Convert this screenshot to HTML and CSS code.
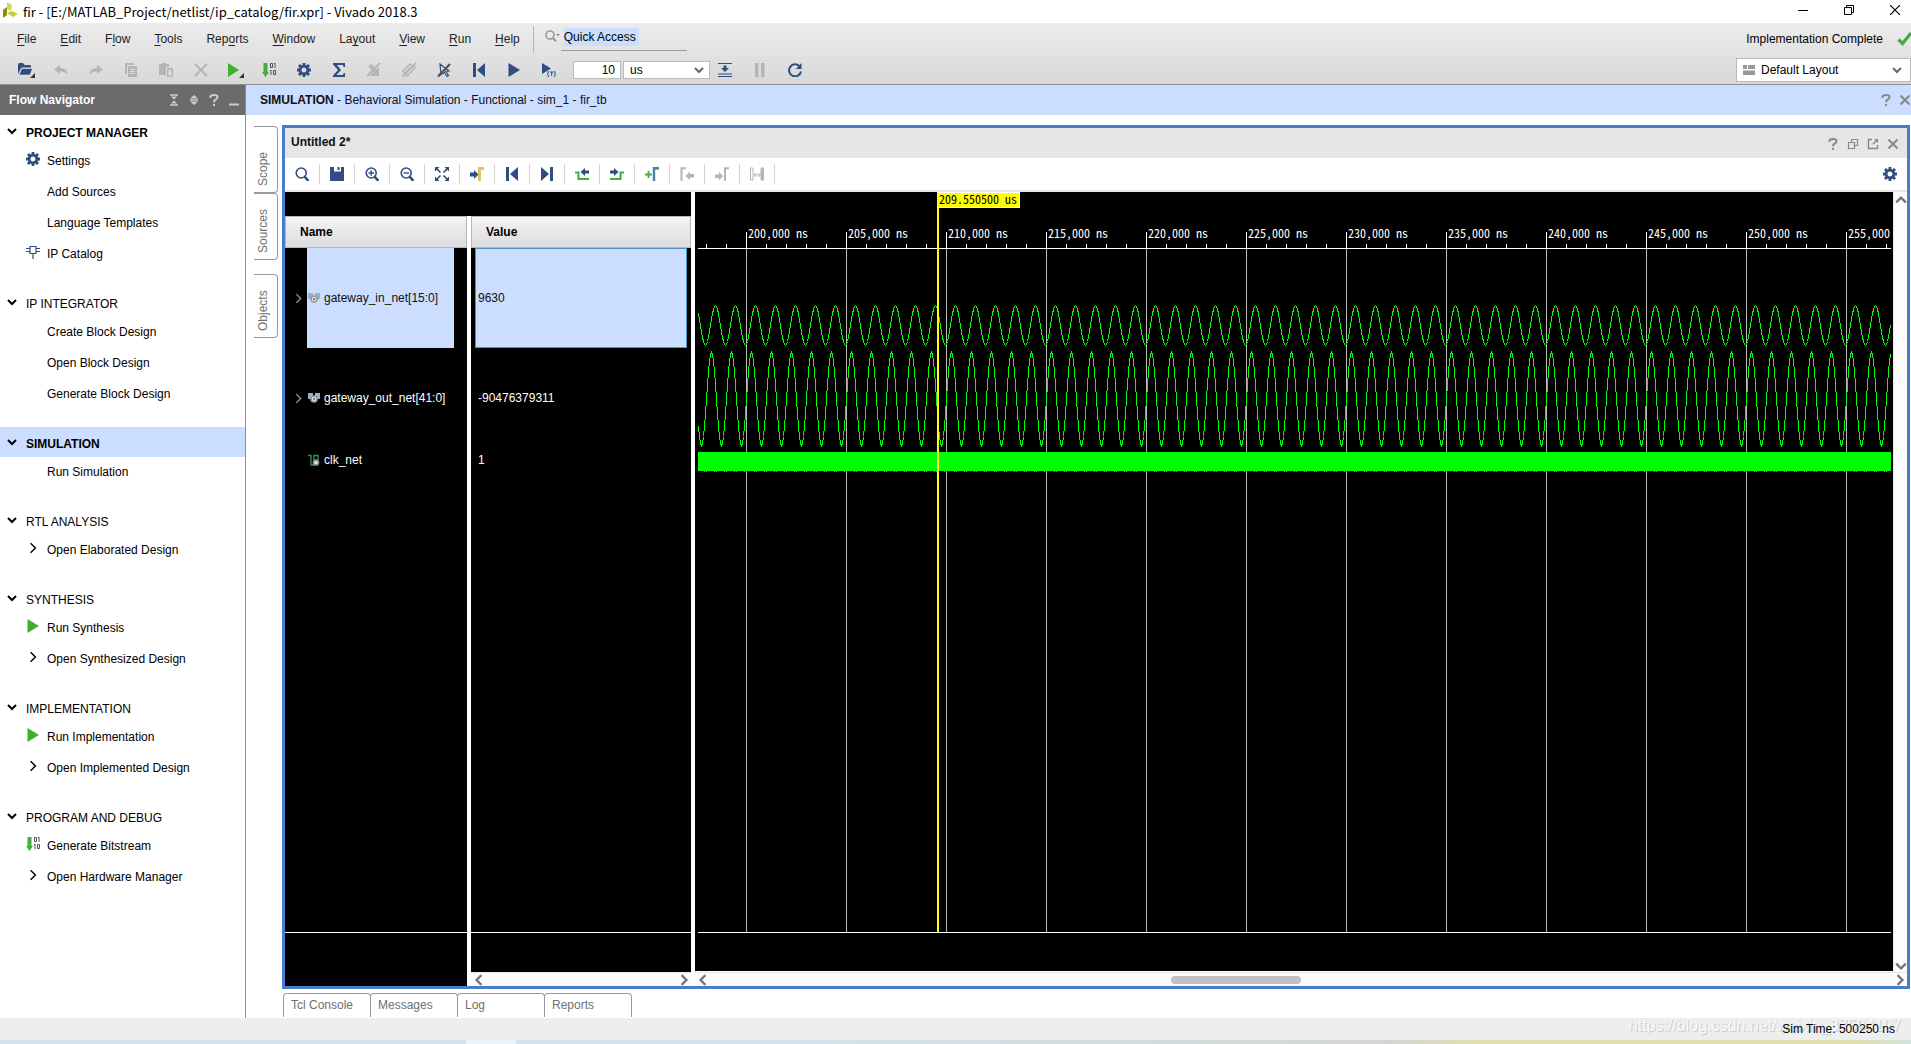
FILE: index.html
```html
<!DOCTYPE html>
<html lang="en">
<head>
<meta charset="utf-8">
<title>fir - [E:/MATLAB_Project/netlist/ip_catalog/fir.xpr] - Vivado 2018.3</title>
<link rel="stylesheet" href="styles.css">
</head>
<body>
<svg class="sprite" aria-hidden="true">
  <symbol id="i-gear" viewBox="0 0 14 14"><path fill="currentColor" fill-rule="evenodd" d="M5.6 0h2.8v2l1 .4 1.6-1.4 2 2L11.600 4.600l.4 1h2v2.800h-2l-.4 1 1.400 1.600-2 2-1.600-1.400-1 .4v2H5.600v-2l-1-.4L3 13l-2-2 1.400-1.600-.4-1H0V5.600h2l.4-1L1 3l2-2 1.600 1.400 1-.4zM7 4.500a2.500 2.500 0 1 0 0 5 2.500 2.500 0 0 0 0-5z"/></symbol>
  <symbol id="i-down" viewBox="0 0 10 10"><path d="M1 3l4 4 4-4" fill="none" stroke="currentColor" stroke-width="2"/></symbol>
  <symbol id="i-right" viewBox="0 0 10 10"><path d="M3 1l4 4-4 4" fill="none" stroke="currentColor" stroke-width="1.200"/></symbol>
  <symbol id="i-play" viewBox="0 0 14 14"><path d="M1.500 0L13 7 1.500 14z" fill="currentColor"/></symbol>
  <symbol id="i-first" viewBox="0 0 14 14"><path d="M1 0h3v14H1zM13 0v14L5 7z" fill="currentColor"/></symbol>
  <symbol id="i-last" viewBox="0 0 14 14"><path d="M13 0h-3v14h3zM1 0v14l8-7z" fill="currentColor"/></symbol>
  <symbol id="i-bits" viewBox="0 0 14 14"><path d="M1.500 0h4v9H7l-3.500 5L0 9h1.500z" fill="#44ad40"/><path d="M8.500.5h2v4h-2zM13 0v5M9 7v5M8 7.500h1M12 .5h1M11.500 7.500h2v4h-2z" fill="none" stroke="#555"/></symbol>
  <symbol id="i-help" viewBox="0 0 12 12"><path d="M2.500 4V2.800Q2.500 1 6 1t3.500 2.300Q9.500 5 7.500 5.800 6 6.400 6 8.400M6 10v2" fill="none" stroke="currentColor" stroke-width="2"/></symbol>
  <symbol id="i-close" viewBox="0 0 12 12"><path d="M1.500 1.500l9 9M10.500 1.500l-9 9" fill="none" stroke="currentColor" stroke-width="2"/></symbol>
  <symbol id="i-mag" viewBox="0 0 14 14"><circle cx="6.200" cy="6" r="5" fill="none" stroke="currentColor" stroke-width="1.600"/><path d="M9.500 9.500L13.500 14" stroke="currentColor" stroke-width="2.600"/></symbol>
  <symbol id="i-bus" viewBox="0 0 12 12"><path d="M0 1h5v3l1 1 1-1V1h5v6H9L8 8H4L3 7H0z" fill="#8fb6c6"/><circle cx="6" cy="7" r="3" fill="#ddd" stroke="#999" stroke-width="1.500"/><circle cx="6" cy="7" r="1" fill="#666"/></symbol>
</svg>

<header class="titlebar">
  <svg class="logo" viewBox="0 0 16 16"><path d="M5 0l5 3-1 6-4-2z" fill="#d2d94a"/><path d="M1 8l4-3v8l-4 3z" fill="#8a8d12"/><path d="M5 11l5-2 6 3-5 3z" fill="#c3cf35"/></svg>
  <h1>fir - [E:/MATLAB_Project/netlist/ip_catalog/fir.xpr] - Vivado 2018.3</h1>
  <div class="winbtns">
    <button aria-label="Minimize"><svg viewBox="0 0 10 10"><path d="M0 5.500h10" stroke="#000"/></svg></button>
    <button aria-label="Restore"><svg viewBox="0 0 10 10"><path d="M.5 2.500h7v7h-7zM2.500 2.500v-2h7v7h-2" fill="none" stroke="#000"/></svg></button>
    <button aria-label="Close"><svg viewBox="0 0 10 10"><path d="M0 0l10 10M10 0L0 10" stroke="#000" stroke-width="1.200"/></svg></button>
  </div>
</header>

<div class="chrome">
  <div class="menurow">
    <nav class="menus">
      <a href="#"><u>F</u>ile</a><a href="#"><u>E</u>dit</a><a href="#">F<u>l</u>ow</a><a href="#"><u>T</u>ools</a><a href="#">Rep<u>o</u>rts</a><a href="#"><u>W</u>indow</a><a href="#">La<u>y</u>out</a><a href="#"><u>V</u>iew</a><a href="#"><u>R</u>un</a><a href="#"><u>H</u>elp</a>
    </nav>
    <label class="quick"><svg class="qmag" viewBox="0 0 16 12"><circle cx="5" cy="5" r="4" fill="none" stroke="#999" stroke-width="1.600"/><path d="M8 8l3 3.500" stroke="#999" stroke-width="2"/><path d="M11 4h4l-2 2z" fill="#888"/></svg><input type="text" value="Quick Access" aria-label="Quick Access"></label>
    <div class="state">Implementation Complete <svg viewBox="0 0 16 14"><path d="M1.500 7.500l4 4L14 1" fill="none" stroke="#44ad40" stroke-width="3.200"/></svg></div>
  </div>
  <div class="toolrow">
    <div class="tools">
      <button aria-label="Open"><svg viewBox="0 0 20 16"><path d="M2 12V2.500Q2 1 3.500 1H7l1.500 2H14q1 0 1 1v1.500H5.500z" fill="#2f4d80"/><path d="M5.800 6.500h10.700L14 13H3z" fill="#2f4d80" stroke="#e4e4e4" stroke-width=".6"/><path d="M19 11v5h-5z" fill="#333"/></svg></button>
      <button class="off" aria-label="Undo"><svg viewBox="0 0 16 14"><path d="M1 6.500L7 2v3q7 0 7.500 6-3-3-7.500-2.500V11z" fill="currentColor"/></svg></button>
      <button class="off" aria-label="Redo"><svg viewBox="0 0 16 14"><path d="M15 6.500L9 2v3q-7 0-7.500 6 3-3 7.500-2.500V11z" fill="currentColor"/></svg></button>
      <button class="off" aria-label="Copy"><svg viewBox="0 0 14 14"><path d="M1 0h9v2H3v9H1zM4 3h9v11H4z" fill="currentColor"/><path d="M6 6.500h5M6 8.500h5M6 10.500h5" stroke="#ddd"/></svg></button>
      <button class="off" aria-label="Paste"><svg viewBox="0 0 14 14"><path d="M0 1h3V0h4v1h3v3H7v8H0zM8 5h6v9H8z" fill="currentColor"/><path d="M9.500 7h3v5.500h-3z" fill="#ddd"/></svg></button>
      <button class="off" aria-label="Delete"><svg viewBox="0 0 14 14"><path d="M1 1l12 12M13 1L1 13" stroke="currentColor" stroke-width="2.200"/></svg></button>
      <button class="go run" aria-label="Run"><svg viewBox="0 0 20 16"><path d="M3 1l11 7-11 7z" fill="currentColor"/><path d="M19 11v5h-5z" fill="#333"/></svg></button>
      <button aria-label="Generate Bitstream"><svg><use href="#i-bits"/></svg></button>
      <button aria-label="Settings"><svg><use href="#i-gear"/></svg></button>
      <button aria-label="Report"><svg viewBox="0 0 14 14"><path d="M1 0h12v4h-1.500L11 2H5l4 5-4.500 5H11l.8-2H13v4H1v-1.500L6 7 1 1.500z" fill="currentColor"/></svg></button>
      <button class="off" aria-label="Cancel elaboration"><svg viewBox="0 0 14 14"><path d="M1 3l4-2 8 12H3l3-4zM8 7l4-3v9z" fill="currentColor"/><path d="M0 13L13 0" stroke="currentColor" stroke-width="2"/></svg></button>
      <button class="off" aria-label="Clear link"><svg viewBox="0 0 14 14"><path d="M1 8l7-7 5 4-8 8zM4 9l6-6" fill="none" stroke="currentColor" stroke-width="1.500"/><path d="M0 14L14 0" stroke="currentColor" stroke-width="2"/></svg></button>
      <button aria-label="No select"><svg viewBox="0 0 14 14"><path d="M3 1l9 7-3 .5 2.500 4-1.500 1-2.500-4L4 11.500z" fill="none" stroke="currentColor" stroke-width="1.200"/><path d="M1 13.500L13 1" stroke="#555" stroke-width="2.400"/></svg></button>
      <button aria-label="Restart"><svg><use href="#i-first"/></svg></button>
      <button aria-label="Run all"><svg><use href="#i-play"/></svg></button>
      <button aria-label="Run for time"><svg viewBox="0 0 14 14"><path d="M0 0l9 5.500L0 11z" fill="currentColor"/><path d="M6.500 8q-1.500 2.500 0 6M12.500 8q1.500 2.500 0 6M8 9h3.500M9.700 9v4" fill="none" stroke="currentColor"/></svg></button>
    </div>
    <input class="time" type="text" value="10" aria-label="Run time">
    <span class="drop unit"><select aria-label="Time unit"><option>us</option></select><svg><use href="#i-down"/></svg></span>
    <div class="tools">
      <button aria-label="Step"><svg viewBox="0 0 14 14"><path d="M0 .5h14M0 11h14M0 13.500h14" stroke="currentColor" stroke-width="1.200"/><path d="M5.500 2.500h3V5H11L7 9 3 5h2.500z" fill="currentColor"/></svg></button>
      <button class="off" aria-label="Break"><svg viewBox="0 0 14 14"><path d="M2 0h3.500v14H2zM8 0h3.500v14H8z" fill="currentColor"/></svg></button>
      <button aria-label="Relaunch"><svg viewBox="0 0 14 14"><path d="M11.500 3.200A6 6 0 1 0 13 8.500" fill="none" stroke="currentColor" stroke-width="2"/><path d="M13.500 0v6H8z" fill="currentColor"/></svg></button>
    </div>
    <span class="drop layout"><svg class="pre" viewBox="0 0 12 10"><path d="M0 0h4v4H0zM5 0h7v4H5zM0 5.500h12V10H0z" fill="#999"/></svg><select aria-label="Layout"><option>Default Layout</option></select><svg><use href="#i-down"/></svg></span>
  </div>
</div>

<div class="work">
  <aside class="side">
    <div class="sidehead"><h2>Flow Navigator</h2>
      <svg viewBox="0 0 12 12"><path d="M2 1h8M2 11h8" stroke="currentColor" stroke-width="1.500"/><path d="M3 2.500h6L6 5.500zM3 9.500h6L6 6.500z" fill="currentColor"/></svg>
      <svg viewBox="0 0 12 12"><path d="M2 4.500L6 1l4 3.500zM2 7.500L6 11l4-3.500zM2 5.300h8v1.400H2z" fill="currentColor"/></svg>
      <svg><use href="#i-help"/></svg>
      <svg viewBox="0 0 12 12"><path d="M1 10.500h10" stroke="currentColor" stroke-width="2"/></svg>
    </div>
    <nav class="flow">
      <section><h3 class="strong"><svg><use href="#i-down"/></svg>PROJECT MANAGER</h3>
        <a href="#"><i class="navy"><svg><use href="#i-gear"/></svg></i>Settings</a>
        <a href="#"><i></i>Add Sources</a>
        <a href="#"><i></i>Language Templates</a>
        <a href="#"><i class="navy"><svg viewBox="0 0 14 14"><path d="M4 1.500h6v7H4zM0 3.500h4M0 6.500h4M10 3.500h4M10 6.500h4M7 9v5" fill="none" stroke="currentColor" stroke-width="1.200"/></svg></i>IP Catalog</a></section>
      <section><h3><svg><use href="#i-down"/></svg>IP INTEGRATOR</h3>
        <a href="#"><i></i>Create Block Design</a>
        <a href="#"><i></i>Open Block Design</a>
        <a href="#"><i></i>Generate Block Design</a></section>
      <section><h3 class="strong current"><svg><use href="#i-down"/></svg>SIMULATION</h3>
        <a href="#"><i></i>Run Simulation</a></section>
      <section><h3><svg><use href="#i-down"/></svg>RTL ANALYSIS</h3>
        <a href="#"><i class="more"><svg><use href="#i-right"/></svg></i>Open Elaborated Design</a></section>
      <section><h3><svg><use href="#i-down"/></svg>SYNTHESIS</h3>
        <a href="#"><i class="go"><svg><use href="#i-play"/></svg></i>Run Synthesis</a>
        <a href="#"><i class="more"><svg><use href="#i-right"/></svg></i>Open Synthesized Design</a></section>
      <section><h3><svg><use href="#i-down"/></svg>IMPLEMENTATION</h3>
        <a href="#"><i class="go"><svg><use href="#i-play"/></svg></i>Run Implementation</a>
        <a href="#"><i class="more"><svg><use href="#i-right"/></svg></i>Open Implemented Design</a></section>
      <section><h3><svg><use href="#i-down"/></svg>PROGRAM AND DEBUG</h3>
        <a href="#"><i><svg><use href="#i-bits"/></svg></i>Generate Bitstream</a>
        <a href="#"><i class="more"><svg><use href="#i-right"/></svg></i>Open Hardware Manager</a></section>
    </nav>
  </aside>

  <main class="main">
    <div class="mainhead"><p><b>SIMULATION</b> - Behavioral Simulation - Functional - sim_1 - fir_tb</p>
      <svg><use href="#i-help"/></svg><svg><use href="#i-close"/></svg></div>
    <div class="dock">
      <div class="vtabs"><button>Scope</button><button>Sources</button><button class="apart">Objects</button></div>
      <div class="center">
        <div class="panel">
          <div class="panelhead"><h2>Untitled 2*</h2>
            <svg><use href="#i-help"/></svg>
            <svg viewBox="0 0 12 12"><path d="M1.500 4.500h6v6h-6zM4.500 4.500v-3h6v6h-3" fill="none" stroke="currentColor" stroke-width="1.200"/></svg>
            <svg viewBox="0 0 12 12"><path d="M5 1.500H1.500v9h9V7" fill="none" stroke="currentColor" stroke-width="1.400"/><path d="M7 1h4v4z" fill="currentColor"/><path d="M6 6l4-4" stroke="currentColor" stroke-width="1.400"/></svg>
            <svg><use href="#i-close"/></svg></div>
          <div class="wavebar">
            <button aria-label="Find"><svg><use href="#i-mag"/></svg></button>
            <button aria-label="Save"><svg viewBox="0 0 14 14"><path d="M0 0h4v4.500h7V0h3v14H0zM7.500 0H9.500v3h-2z" fill="currentColor"/></svg></button>
            <button aria-label="Zoom in"><svg viewBox="0 0 14 14"><use href="#i-mag" width="14" height="14"/><path d="M3.500 6H9M6.200 3.300v5.400" stroke="currentColor" stroke-width="1.400"/></svg></button>
            <button aria-label="Zoom out"><svg viewBox="0 0 14 14"><use href="#i-mag" width="14" height="14"/><path d="M3.500 6H9" stroke="currentColor" stroke-width="1.400"/></svg></button>
            <button aria-label="Zoom fit"><svg viewBox="0 0 14 14"><path d="M0 0h4.500L0 4.500zM14 0v4.500L9.500 0zM0 14V9.500L4.500 14zM14 14H9.500L14 9.500z" fill="currentColor"/><path d="M1 1l4.500 4.500M13 1L8.500 5.500M1 13l4.500-4.500M13 13L8.500 8.500" stroke="currentColor" stroke-width="1.600"/></svg></button>
            <button aria-label="Go to cursor"><svg viewBox="0 0 14 14"><path d="M0 5.500h4V3l4.500 4.500L4 12V9.500H0z" fill="currentColor"/><path d="M9.500 14V1.500H14" fill="none" stroke="#dcc466" stroke-width="3"/></svg></button>
            <button aria-label="Go to start"><svg><use href="#i-first"/></svg></button>
            <button aria-label="Go to end"><svg><use href="#i-last"/></svg></button>
            <button aria-label="Previous transition"><svg viewBox="0 0 14 14"><path d="M0 5.500h3.500V12H14" fill="none" stroke="#44ad40" stroke-width="2"/><path d="M14 3.500h-4V1L5.500 5 10 9V6.500h4z" fill="currentColor"/></svg></button>
            <button aria-label="Next transition"><svg viewBox="0 0 14 14"><path d="M14 5.500h-3.500V12H0" fill="none" stroke="#44ad40" stroke-width="2"/><path d="M0 3.500h4V1l4.500 4L4 9V6.500H0z" fill="currentColor"/></svg></button>
            <button aria-label="Add marker"><svg viewBox="0 0 14 14"><path d="M0 7.500h7M3.500 4v7" stroke="#44ad40" stroke-width="1.800"/><path d="M9 14V1.200h5" fill="none" stroke="#3c84ac" stroke-width="2.400"/></svg></button>
            <button class="off" aria-label="Previous marker"><svg viewBox="0 0 14 14"><path d="M1.500 14V1.200H6" fill="none" stroke="currentColor" stroke-width="2"/><path d="M14 7h-4V4.500L5.500 9l4.500 4v-2.500h4z" fill="currentColor"/></svg></button>
            <button class="off" aria-label="Next marker"><svg viewBox="0 0 14 14"><path d="M10 14V1.200h4" fill="none" stroke="currentColor" stroke-width="2"/><path d="M0 7.500h4V5l4 4-4 4.500V11H0z" fill="currentColor"/></svg></button>
            <button class="off" aria-label="Swap cursors"><svg viewBox="0 0 14 14"><path d="M.5 1h2.500v12H.5zM11 1h3v12h-3z" fill="none" stroke="currentColor"/><path d="M11 1h3v12h-3z" fill="currentColor"/><path d="M4 8h6.500M6 6L4 8l2 2M8.500 6l2 2-2 2" fill="none" stroke="currentColor"/></svg></button>
            <button class="prefs" aria-label="Waveform settings"><svg><use href="#i-gear"/></svg></button>
          </div>
          <div class="viewer">
            <div class="signals">
              <table>
                <thead><tr><th>Name</th><th>Value</th></tr></thead>
                <tbody>
                  <tr class="tall selected"><td><div class="sig"><svg class="chev"><use href="#i-right"/></svg><span><svg><use href="#i-bus"/></svg>gateway_in_net[15:0]</span></div></td><td><div class="val">9630</div></td></tr>
                  <tr class="tall"><td><div class="sig"><svg class="chev"><use href="#i-right"/></svg><span><svg><use href="#i-bus"/></svg>gateway_out_net[41:0]</span></div></td><td><div class="val">-90476379311</div></td></tr>
                  <tr class="short"><td><div class="sig leaf"><span><svg viewBox="0 0 12 12"><path d="M0 1.500h3V11h3V1.500h4V6" fill="none" stroke="#2f9a48" stroke-width="1.300"/><circle cx="8" cy="8.500" r="2.600" fill="#ddd" stroke="#888" stroke-width="1.500"/></svg>clk_net</span></div></td><td><div class="val">1</div></td></tr>
                  <tr class="rest"><td></td><td></td></tr>
                  <tr class="end"><td></td><td></td></tr>
                </tbody>
              </table>
              <div class="under"><div class="hscroll"><svg class="l"><use href="#i-down"/></svg><svg class="r"><use href="#i-down"/></svg></div></div>
            </div>
            <div class="plot">
              <svg id="wave" class="wave" role="img" aria-label="Waveforms"></svg>
              <div class="vscroll"><svg class="u"><use href="#i-down"/></svg><svg><use href="#i-down"/></svg></div>
              <div class="hscroll wide"><svg class="l"><use href="#i-down"/></svg><div class="track"><div class="thumb"></div></div><svg class="r"><use href="#i-down"/></svg></div>
            </div>
          </div>
        </div>
        <div class="btabs"><button>Tcl Console</button><button>Messages</button><button>Log</button><button>Reports</button></div>
      </div>
    </div>
  </main>
</div>
<footer class="status"><span class="mark">https://blog.csdn.net/weixin_37594197</span><span class="sim">Sim Time: 500250 ns</span></footer>
<div class="strip"></div>
<script src="wave.js"></script>
</body>
</html>
```
FILE: styles.css
```css
* { box-sizing: border-box; }
body {
  margin: 0; height: 100vh; display: flex; flex-direction: column; overflow: hidden;
  background: #fff; color: #000; font: 12px/16px "Liberation Sans", Arial, sans-serif;
}
h1, h2, h3, p { margin: 0; font-size: 12px; }
a { color: inherit; text-decoration: none; }
button { border: 0; padding: 0; background: none; font: inherit; color: inherit; }
input, select { font: inherit; color: inherit; border: 0; padding: 0; margin: 0; border-radius: 0; }
svg { display: block; flex: none; }
.sprite { position: absolute; width: 0; height: 0; }

.titlebar { height: 23px; display: flex; align-items: center; padding-left: 2px; flex: none; }
.logo { width: 16px; height: 16px; margin-bottom: 3px; }
.titlebar h1 { flex: 1; margin-left: 5px; font: 13px/20px "Noto Sans CJK SC", "Noto Sans", sans-serif; }
.winbtns { display: flex; gap: 36px; padding: 0 11px 3px 0; }
.winbtns svg { width: 10px; height: 10px; }

.chrome { height: 62px; flex: none; background: linear-gradient(#ececec, #d8d8d8); border-bottom: 1px solid #8f8f8f; }
.menurow { height: 34px; display: flex; align-items: center; padding-bottom: 2px; }
.menus { display: flex; gap: 24px; padding-left: 17px; color: #222; }
.menus u { text-underline-offset: 2px; }
.quick { display: flex; align-items: center; height: 27px; margin-left: 13px; padding-left: 11px; border-left: 1px solid #b8b8b8; }
.qmag { width: 16px; height: 12px; margin-bottom: 6px; }
.quick input { width: 126px; height: 24px; background: linear-gradient(#cbdeff, #cbdeff) 3px 1px / 75px 18px no-repeat; padding: 0 0 4px 3px; border-bottom: 1px solid #999; }
.state { margin-left: auto; display: flex; align-items: center; gap: 14px; margin-right: -2px; }
.state svg { width: 16px; height: 14px; }

.toolrow { height: 27px; display: flex; align-items: center; padding: 0 0 1px 11px; }
.tools { display: flex; gap: 5px; color: #2f4d80; }
.tools button { width: 30px; height: 20px; display: flex; align-items: center; justify-content: center; }
.tools .run { width: 28px; }
.tools svg { width: 14px; height: 14px; }
.tools svg[viewBox="0 0 20 16"] { width: 20px; height: 18px; }
.tools svg[viewBox="0 0 16 14"] { width: 16px; }
.off, .tools .off { color: #b5b5b5; }
.go, .tools .go { color: #40b02c; }
.time { width: 48px; height: 18px; margin: 0 2px 0 9px; padding-right: 5px; text-align: right; background: #fff; border: 1px solid #bbb; }
.drop { display: flex; align-items: center; background: #fff; border: 1px solid #bbb; }
.drop select { flex: 1; appearance: none; background: none; height: 100%; padding-left: 6px; outline: 0; }
.drop > svg { width: 10px; height: 10px; color: #666; margin-right: 5px; }
.unit { width: 87px; height: 18px; }
.layout { width: 175px; height: 24px; margin-left: auto; }
.drop > svg.pre { width: 12px; margin: 0 0 0 6px; }
.layout > svg:last-child { margin-right: 8px; }

.work { flex: 1; min-height: 0; display: flex; }
.side { width: 246px; flex: none; border-right: 1px solid #8f8f8f; }
.sidehead { height: 30px; display: flex; align-items: center; gap: 8px; padding: 0 5px 0 9px; background: #6b6b6b; color: #ccc; }
.sidehead h2 { flex: 1; color: #fff; }
.sidehead svg, .mainhead svg, .panelhead svg { width: 12px; height: 12px; }
.flow { padding-top: 1px; }
.flow section { margin-bottom: 17px; }
.flow h3 { height: 30px; display: flex; align-items: center; gap: 9px; padding: 4px 0 0 7px; font-weight: normal; }
.flow h3 svg { width: 10px; height: 10px; margin-bottom: 4px; }
.flow .strong { font-weight: bold; }
.flow .current { background: #cbdeff; }
.flow a { height: 31px; display: flex; align-items: center; gap: 7px; padding: 0 0 2px 26px; }
.flow i { width: 14px; height: 14px; margin-bottom: 4px; display: flex; align-items: center; justify-content: center; }
.flow i svg { width: 14px; height: 14px; }
.flow i.more svg { width: 12px; height: 12px; }
.navy { color: #2f4d80; }

.main { flex: 1; min-width: 0; display: flex; flex-direction: column; }
.mainhead { height: 30px; flex: none; display: flex; align-items: center; gap: 7px; padding-left: 14px; background: #cbdeff; color: #888; }
.mainhead p { flex: 1; color: #111; }
.dock { flex: 1; min-height: 0; display: flex; }
.vtabs { width: 36px; padding: 11px 4px 0 8px; display: flex; flex-direction: column; color: #707070; }
.vtabs button { height: 67px; width: 24px; border: 1px solid #999; border-right: 0; writing-mode: vertical-rl; transform: rotate(180deg); text-align: left; padding: 6px 0 6px 6px; border-radius: 4px 0 0 4px; }
.vtabs .apart { height: 64px; margin-top: 14px; }
.center { flex: 1; min-width: 0; display: flex; flex-direction: column; padding: 10px 1px 0 0; }
.panel { flex: 1; min-height: 0; display: flex; flex-direction: column; border: 3px solid #4a7ccd; }
.panelhead { height: 30px; flex: none; display: flex; align-items: center; gap: 8px; padding: 0 8px 2px 6px; background: #e6e6e6; color: #888; }
.panelhead h2 { flex: 1; color: #111; }
.panelhead svg { margin-top: 4px; }
.wavebar { height: 34px; flex: none; display: flex; align-items: center; border-bottom: 2px solid #e6e6e6; color: #2f4d80; }
.wavebar button { width: 35px; height: 20px; display: flex; align-items: center; justify-content: center; border-right: 1px solid #d4d4d4; }
.wavebar .off { color: #b5b5b5; }
.wavebar svg { width: 14px; height: 14px; }
.wavebar .prefs { margin-left: auto; border: 0; }

.viewer { flex: 1; min-height: 0; display: flex; }
.signals { width: 406px; flex: none; display: grid; grid-template-rows: 1fr 14px; padding-top: 24px; background: #000; color: #fff; }
.signals table { width: 406px; height: 100%; table-layout: fixed; border-collapse: separate; border-spacing: 0; }
.signals th, .signals td { padding: 0; }
.signals tr > :first-child { width: 182px; }
.signals tr > :last-child { border-left: 4px solid #fff; }
.signals th { height: 32px; text-align: left; color: #000; background: linear-gradient(#f4f4f4, #dcdcde); padding: 0 15px; box-shadow: inset -1px 1px #b8b8b8, inset 1px -1px #b8b8b8; }
.tall { height: 100px; }
.short { height: 24px; }
.signals .rest td { border-bottom: 1px solid #fff; }
.end { height: 39px; }
.sig { height: 100%; display: flex; align-items: center; padding: 0 13px 0 8px; white-space: nowrap; }
.sig.leaf { padding-left: 22px; }
.tall .sig { height: 100px; }
.chev { width: 11px; height: 11px; color: #999; margin-right: 3px; }
.sig span { flex: 1; height: 100%; display: flex; align-items: center; gap: 4px; padding-left: 1px; }
.sig span svg { width: 12px; height: 12px; }
.val { margin: 0 4px; padding-left: 3px; }
.selected .sig span { background: #cbdeff; color: #111; }
.selected .val { height: 100px; line-height: 98px; background: #cbdeff; color: #111; border: 1px solid #4a96cc; padding-left: 2px; }
.under { padding-left: 182px; display: flex; }
.under .hscroll { flex: 1; border-left: 4px solid #fff; }
.hscroll { display: flex; align-items: center; justify-content: space-between; background: #fbfbfb; border-top: 1px solid #e6e6e6; color: #777; padding: 0 1px 0 2px; }
.hscroll > svg, .vscroll > svg { width: 12px; height: 12px; }
.l { transform: rotate(90deg); }
.r { transform: rotate(-90deg); }
.u { transform: rotate(180deg); }
.plot { flex: 1; min-width: 0; display: grid; grid-template: minmax(0, 1fr) 14px / minmax(0, 1fr) 14px; border-left: 4px solid #fff; }
.wave { width: 100%; height: 100%; background: #000; border-bottom: 1px solid #fff; }
.wave text { font: 12px "Noto Sans Mono CJK SC", "Liberation Mono", monospace; fill: #fff; white-space: pre; }
.wave .flag { fill: #000; }
.vscroll { display: flex; flex-direction: column; justify-content: space-between; align-items: center; padding: 2px 0 0; background: #fbfbfb; border-left: 1px solid #e6e6e6; color: #777; }
.wide { grid-column: 1 / -1; }
.track { flex: 1; }
.thumb { width: 11%; height: 8px; margin-left: 39%; border-radius: 4px; background: #c1c1c1; }

.btabs { display: flex; height: 29px; flex: none; padding: 4px 0 1px 1px; color: #707070; }
.btabs button { width: 88px; margin-right: -1px; text-align: left; padding: 0 0 1px 7px; border: 1px solid #999; border-bottom: 0; border-radius: 4px 4px 0 0; }
.status { height: 22px; flex: none; position: relative; display: flex; justify-content: flex-end; align-items: center; padding-right: 16px; background: #eee; }
.mark { position: absolute; right: 10px; top: -2px; font-size: 16px; line-height: 20px; color: #f8f8f8; text-shadow: 1px 1px #ccc; }
.sim { position: relative; }
.strip { height: 4px; flex: none; background: linear-gradient(90deg, #d3e2ec 0 24.4%, #ebf3f9 24.4% 27%, #d3e2ec 27% 40%, #d2dcdc 60%, #d4d4d4 73%, #e0dfb0 77%, #e0dfb0 97%, #d3e2dc); }
```
FILE: wave.js
```js
// Time ruler, grid and analog traces of the waveform viewer.
const NS = "http://www.w3.org/2000/svg";
const svg = document.getElementById("wave");
const LEFT = 3, FIRST = 51, MAJOR = 100, MINOR = 20, AXIS = 56;

function add(name, attrs, text) {
  const el = document.createElementNS(NS, name);
  for (const key in attrs) el.setAttribute(key, attrs[key]);
  if (text) el.textContent = text;
  svg.appendChild(el);
}
function bar(x, y, width, height, fill) {
  add("rect", { x, y, width, height, fill });
}
function trace(peak, middle, amplitude, right) {
  const points = [];
  for (let x = LEFT; x < right; x++) {
    points.push((x + 0.5) + "," + (Math.round(middle - amplitude * Math.cos((x - peak) * Math.PI / 10)) + 0.5));
  }
  add("polyline", { points: points.join(" "), fill: "none", stroke: "#00ff00", "shape-rendering": "crispEdges" });
}
function draw() {
  svg.textContent = "";
  const right = svg.clientWidth - 2, bottom = svg.clientHeight - 39;
  for (let x = FIRST, n = 200; x < right; x += MAJOR, n += 5) {
    bar(x, AXIS, 1, bottom - AXIS, "#b8b8b8");
    bar(x, 40, 1, 16, "#fff");
    add("text", { x: x + 2, y: 46 }, n + ",000 ns");
  }
  for (let x = FIRST % MINOR; x < right; x += MINOR) bar(x, AXIS - 4, 1, 4, "#fff");
  bar(LEFT, AXIS, right - LEFT, 1, "#fff");
  bar(LEFT, bottom, right - LEFT, 1, "#fff");
  trace(20, 133, 20, right);
  trace(16, 206.5, 46.5, right);
  bar(LEFT, 260, right - LEFT, 19, "#00ff00");
  for (let x = 9; x < right; x += 10) { bar(x, 279, 1, 1, "#00ff00"); bar(x + 2, 279, 1, 1, "#00ff00"); }
  bar(242, 0, 2, bottom, "#ffff00");
  bar(242, 0, 83, 16, "#fff");
  bar(242, 1, 82, 14, "#ffff00");
  add("text", { x: 244, y: 12, class: "flag" }, "209.550500 us");
}
draw();
window.addEventListener("resize", draw);
```
